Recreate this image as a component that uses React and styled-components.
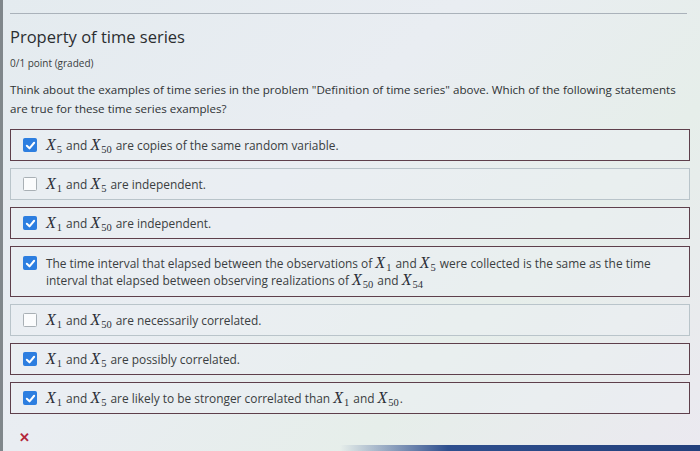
import React from "react";
import styled, { createGlobalStyle } from "styled-components";

const Global = createGlobalStyle`
  html, body { margin: 0; padding: 0; }
  body {
    width: 700px; height: 451px; overflow: hidden;
    background: linear-gradient(135deg, #e4ebef 0%, #e9edf2 40%, #e6eeea 70%, #ebe9f0 100%);
    font-family: "Open Sans", "Noto Sans", sans-serif;
    color: #2f3335;
  }
`;

const Page = styled.div`
  position: relative;
  height: 451px;
  box-sizing: border-box;
  border-left: 3px solid #80878b;
  padding: 13px 10px 0 7px;
`;

const Rule = styled.div`
  height: 0;
  border-top: 1.5px solid #aab2ba;
  margin-right: 3px;
`;

const Title = styled.h2`
  margin: 12px 0 0;
  font-size: 16.5px;
  font-weight: 400;
  line-height: 22px;
  color: #2b2e30;
`;

const Meta = styled.div`
  margin-top: 8px;
  font-size: 10px;
  line-height: 14px;
  color: #3a3d40;
`;

const Prompt = styled.p`
  margin: 10px 0 0;
  font-size: 11.6px;
  line-height: 19px;
  color: #2f3335;
  padding-right: 0;
`;

const Options = styled.div`
  display: flex;
  flex-direction: column;
  gap: 7px;
  margin-top: 11px;
`;

const Option = styled.label`
  display: flex;
  align-items: ${(p) => (p.$multi ? "flex-start" : "center")};
  gap: 9px;
  box-sizing: border-box;
  min-height: 32px;
  padding: ${(p) => (p.$multi ? "8px 12px 7px" : "4px 12px")};
  border: 1.5px solid ${(p) => (p.$checked ? "#5e3f4b" : "#b9c4ca")};
  background: rgba(236, 240, 244, 0.5);
  font-size: 11.9px;
  line-height: 17px;
  color: #3a3e41;
`;

const Box = styled.span`
  flex: none;
  width: 14px;
  height: 14px;
  box-sizing: border-box;
  border-radius: 1.5px;
  display: inline-flex;
  align-items: center;
  justify-content: center;
  margin-top: ${(p) => (p.$multi ? "1px" : "0")};
  background: ${(p) => (p.$checked ? "#2d7ee0" : "#fbfcfd")};
  border: 1px solid ${(p) => (p.$checked ? "#2d7ee0" : "#a9b0b5")};
`;

const Text = styled.span`
  display: block;
`;

const MathX = styled.span`
  font-family: "Liberation Serif", "DejaVu Serif", serif;
  font-style: italic;
  font-size: 16px;
  line-height: 1;
  color: #2c2f38;
  margin-right: 1px;
`;

const Sub = styled.span`
  display: inline-block;
  font-family: "Liberation Serif", "DejaVu Serif", serif;
  font-style: normal;
  font-size: 10.5px;
  line-height: 1;
  transform: translateY(3px);
  margin-left: 1px;
`;

const Result = styled.div`
  margin-top: 15px;
  padding-left: 9px;
  color: #b3263a;
  font-size: 13px;
  font-weight: 700;
  line-height: 16px;
`;

const BottomBar = styled.div`
  position: absolute;
  right: 0;
  bottom: 0;
  width: 360px;
  height: 6px;
  background: linear-gradient(90deg, rgba(40, 70, 140, 0) 0%, #2e4f8e 30%, #23407c 100%);
`;

const X = ({ n }) => (
  <MathX>
    X<Sub>{n}</Sub>
  </MathX>
);

const Check = () => (
  <svg width="11" height="11" viewBox="0 0 12 12">
    <path d="M2 6.3 L4.9 9.1 L10 3" fill="none" stroke="#fff" strokeWidth="2.2" strokeLinecap="round" strokeLinejoin="round" />
  </svg>
);

const items = [
  { checked: true, content: <><X n="5" /> and <X n="50" /> are copies of the same random variable.</> },
  { checked: false, content: <><X n="1" /> and <X n="5" /> are independent.</> },
  { checked: true, content: <><X n="1" /> and <X n="50" /> are independent.</> },
  {
    checked: true,
    multi: true,
    content: (
      <>
        The time interval that elapsed between the observations of <X n="1" /> and <X n="5" /> were collected is the same as the time
        interval that elapsed between observing realizations of <X n="50" /> and <X n="54" />
      </>
    ),
  },
  { checked: false, content: <><X n="1" /> and <X n="50" /> are necessarily correlated.</> },
  { checked: true, content: <><X n="1" /> and <X n="5" /> are possibly correlated.</> },
  { checked: true, content: <><X n="1" /> and <X n="5" /> are likely to be stronger correlated than <X n="1" /> and <X n="50" />.</> },
];

export default function App() {
  return (
    <>
      <Global />
      <Page>
        <Rule />
        <Title>Property of time series</Title>
        <Meta>0/1 point (graded)</Meta>
        <Prompt>
          Think about the examples of time series in the problem "Definition of time series" above. Which of the following statements
          are true for these time series examples?
        </Prompt>
        <Options>
          {items.map((it, i) => (
            <Option key={i} $checked={it.checked} $multi={it.multi}>
              <Box $checked={it.checked} $multi={it.multi}>{it.checked && <Check />}</Box>
              <Text>{it.content}</Text>
            </Option>
          ))}
        </Options>
        <Result>✕</Result>
        <BottomBar />
      </Page>
    </>
  );
}
